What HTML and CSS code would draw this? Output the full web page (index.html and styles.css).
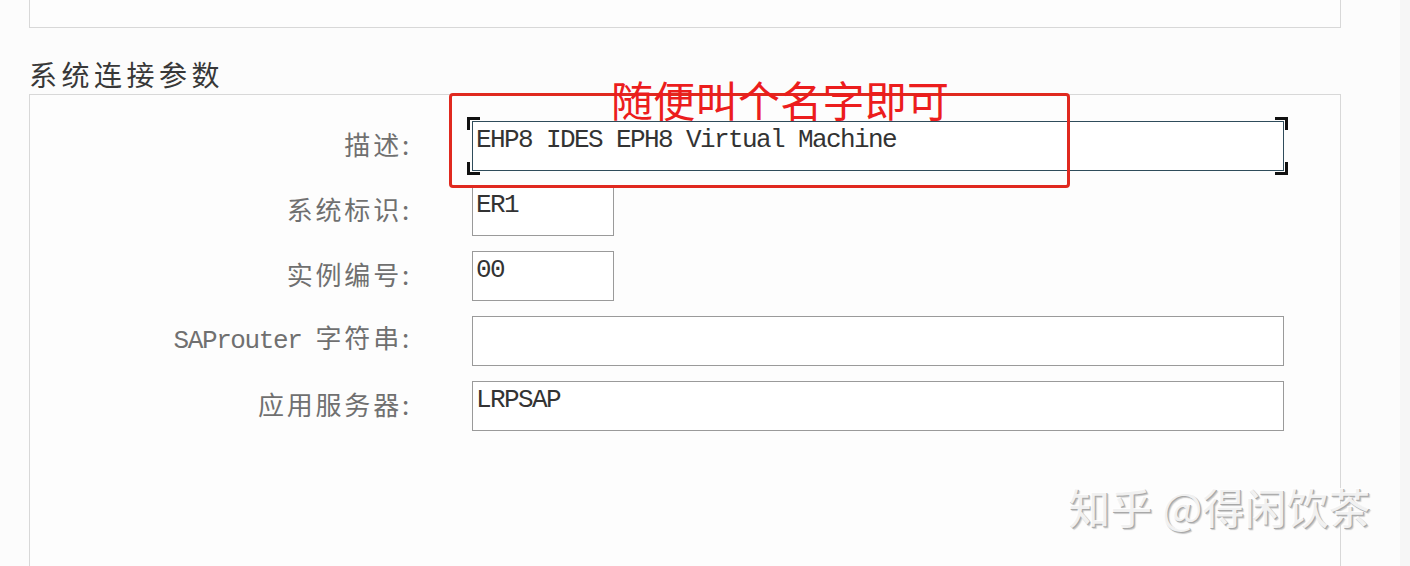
FILE: index.html
```html
<!DOCTYPE html>
<html lang="zh-CN">
<head>
    <meta charset="UTF-8">
    <title>系统连接参数</title>
    <link rel="stylesheet" href="styles.css">
</head>
<body>
    <div class="page">
        <div class="top-box"></div>

        <h2 class="section-title">系统连接参数</h2>

        <div class="section-box">
            <div class="form">
                <label class="label">描述:</label>
                <div class="field focused">
                    <input class="input wide" type="text" value="EHP8 IDES EPH8 Virtual Machine">
                    <span class="corner tl"></span>
                    <span class="corner tr"></span>
                    <span class="corner bl"></span>
                    <span class="corner br"></span>
                </div>

                <label class="label">系统标识:</label>
                <div class="field"><input class="input short" type="text" value="ER1"></div>

                <label class="label">实例编号:</label>
                <div class="field"><input class="input short" type="text" value="00"></div>

                <label class="label"><span class="latin">SAProuter </span>字符串:</label>
                <div class="field"><input class="input wide" type="text" value=""></div>

                <label class="label">应用服务器:</label>
                <div class="field"><input class="input wide" type="text" value="LRPSAP"></div>
            </div>
        </div>

        <!-- annotation drawn over the screenshot -->
        <div class="note-box"></div>
        <div class="note-text">随便叫个名字即可</div>

        <div class="watermark">知乎 @得闲饮茶</div>
    </div>
</body>
</html>
```

FILE: styles.css
```css
body {
    margin: 0;
    background: #f6f6f6;
    font-family: "Noto Sans CJK SC", sans-serif;
    overflow: hidden;
}
.page {
    position: relative;
    width: 1400px;
    height: 566px;
    background: #fcfcfc;
    padding-left: 29px;
    box-sizing: border-box;
}
.top-box {
    width: 1312px;
    height: 28px;
    box-sizing: border-box;
    border: 1px solid #d8d8d8;
    border-top: none;
    background: #fdfdfd;
}
.section-title {
    margin: 29px 0 0;
    height: 37px;
    line-height: 35px;
    font-size: 28px;
    font-weight: normal;
    letter-spacing: 4.5px;
    color: #383838;
}
.section-box {
    width: 1312px;
    height: 480px;
    box-sizing: border-box;
    border: 1px solid #d8d8d8;
    background: #fdfdfd;
    padding-top: 26px;
}
.form {
    display: grid;
    grid-template-columns: 382px 812px;
    column-gap: 60px;
    row-gap: 15px;
    align-items: center;
}
.label {
    text-align: right;
    font-size: 26px;
    line-height: 34px;
    padding-bottom: 4px;
    letter-spacing: 2.8px;
    color: #707070;
    white-space: nowrap;
}
.latin {
    font-family: "Liberation Mono", monospace;
    letter-spacing: -1.4px;
}
.field {
    position: relative;
    height: 50px;
}
.input {
    display: block;
    height: 50px;
    box-sizing: border-box;
    border: 1px solid #9a9a9a;
    background: #fff;
    padding: 0 0 12px 3px;
    font-family: "Liberation Mono", monospace;
    font-size: 26px;
    letter-spacing: -1.6px;
    color: #333;
    outline: none;
}
.wide {
    width: 812px;
}
.short {
    width: 142px;
}
.focused .input {
    border-color: #2f4c5b;
}
.corner {
    position: absolute;
    width: 10px;
    height: 10px;
    border: 0 solid #111;
}
.corner.tl {
    left: -5px;
    top: -4px;
    border-left-width: 3px;
    border-top-width: 3px;
}
.corner.tr {
    right: -4px;
    top: -4px;
    border-right-width: 3px;
    border-top-width: 3px;
}
.corner.bl {
    left: -5px;
    bottom: -4px;
    border-left-width: 3px;
    border-bottom-width: 3px;
}
.corner.br {
    right: -4px;
    bottom: -4px;
    border-right-width: 3px;
    border-bottom-width: 3px;
}
.note-box {
    position: absolute;
    left: 449px;
    top: 93px;
    width: 621px;
    height: 95px;
    box-sizing: border-box;
    border: 3px solid #e0291f;
    border-radius: 4px;
}
.note-text {
    position: absolute;
    left: 611px;
    top: 74px;
    font-size: 42px;
    line-height: 50px;
    letter-spacing: 0.3px;
    color: #ec1d1d;
    white-space: nowrap;
}
.watermark {
    position: absolute;
    left: 1068px;
    top: 481px;
    font-size: 42px;
    line-height: 50px;
    font-weight: 500;
    color: rgba(255, 255, 255, 0.85);
    text-shadow: 1px 1px 0 #a8a8a8, 2px 2px 1px #c8c8c8;
    white-space: nowrap;
}
```
